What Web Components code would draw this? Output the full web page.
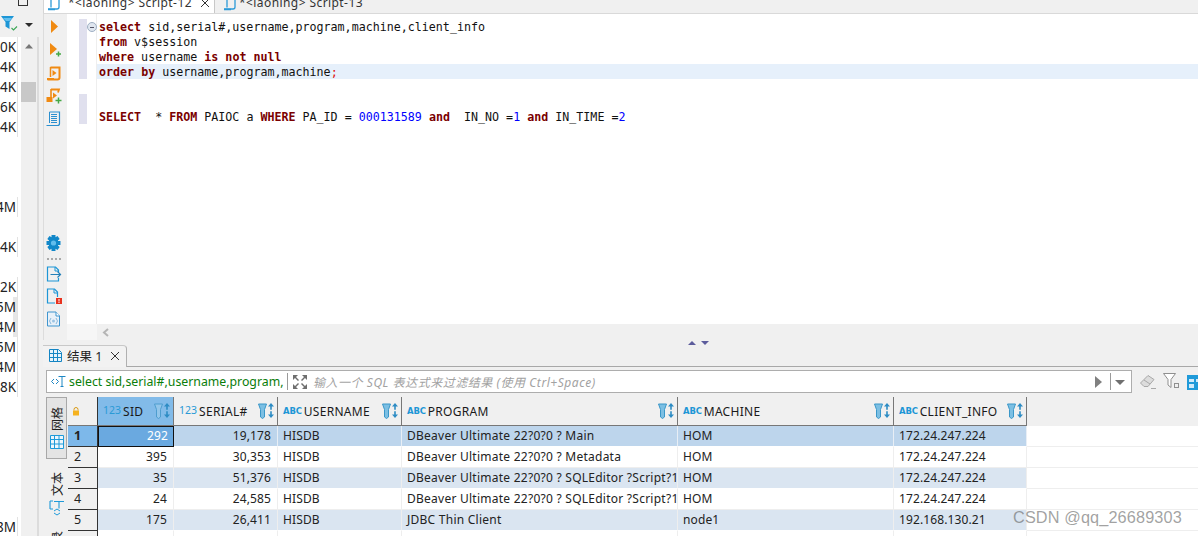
<!DOCTYPE html>
<html>
<head>
<meta charset="utf-8">
<style>
  html, body { margin: 0; height: 536px; overflow: hidden; background: #f0f0f0; }
</style>
</head>
<body>
<ide-app></ide-app>
<script>
const OR = '#f08a12', BL = '#1d96d6', GN = '#45a845', GY = '#8c8c8c';
const ICONS = {
  run: [16, `<path d="M5 0l7 6.500-7 6.500z" fill="${OR}" transform="translate(0 1)"/>`],
  runadd: [16, `<path d="M3 0l7 6-7 6z" fill="${OR}" transform="translate(1 1)"/><path d="M10 12h5M12.500 9.500v5" stroke="${GN}" stroke-width="1.500"/>`],
  script: [16, `<path d="M4.500 2.500h9v10a2 2 0 0 1-2 2h-10" fill="none" stroke="${OR}" stroke-width="2"/><path d="M1 14h7" stroke="${OR}" stroke-width="2"/><path d="M6.500 5l4 3-4 3z" fill="${OR}"/><path d="M4.500 2v10" stroke="${OR}" stroke-width="1.500"/>`],
  scriptadd: [16, `<path d="M5 1.500h8l-1 3" fill="none" stroke="${OR}" stroke-width="1.800"/><path d="M5 1v8" stroke="${OR}" stroke-width="1.600"/><path d="M7 4.500l4 3-4 3z" fill="${OR}"/><rect x="0.500" y="9" width="6" height="5" fill="${OR}"/><path d="M9.500 12.500h6M12.500 9.500v6" stroke="${GN}" stroke-width="1.500"/>`],
  list: [16, `<path d="M3.500 1h10v11.500a2 2 0 0 1-2 2h-11" fill="none" stroke="#2b8fcf" stroke-width="1.200"/><path d="M1 14.500h7M5 3.500h6M5 5.500h6M5 7.500h6M5 9.500h6M5 11.500h6" stroke="#2b8fcf"/><path d="M3.500 1v11" stroke="#2b8fcf"/>`],
  gear: [16, `<path d="M5.500 0h4v2.300l2-1.200 2.200 2.900-1.800 1.500.2 .5h2.400v4h-2.400l-.2 .5 1.800 1.500-2.200 2.900-2-1.200V16h-4v-2.300l-2 1.200-2.200-2.900 1.800-1.500-.2-.5H.5V6h2.400l.2-.5L1.300 4l2.200-2.900 2 1.200z" fill="#1187c9"/><circle cx="7.500" cy="8" r="2.600" fill="#62bcec"/>`],
  dots: [16, `<path d="M1 8h14" stroke="#a9a9a9" stroke-width="2" stroke-dasharray="2 2"/>`],
  exportdoc: [16, `<path d="M12.500 6V4l-3-3h-8v14h11v-3" fill="none" stroke="${BL}" stroke-width="1.200"/><path d="M9 1v4h4" fill="none" stroke="${BL}"/><path d="M4.500 8.500h10M11.500 5.500l3 3-3 3" fill="none" stroke="#227fb8" stroke-width="1.200"/>`],
  errdoc: [16, `<path d="M9 15H1.500V1h7l3 3v5" fill="none" stroke="${BL}" stroke-width="1.200"/><path d="M8 1v4h4" fill="none" stroke="${BL}"/><rect x="10" y="10" width="6" height="6" fill="#e8321e"/><path d="M13 11v2.500M13 14v1" stroke="#fff"/>`],
  xdoc: [16, `<path d="M13.500 4.500l-3.500-3.500H1.500v14h12z" fill="#e8f1f9" stroke="#3f95cf"/><path d="M10 1v4h4" fill="#fff" stroke="#3f95cf"/><path d="M5 7l-1.500 3L5 13M10 7l1.500 3-1.500 3" fill="none" stroke="#8ab8dc"/><circle cx="7.500" cy="10" r="1.500" fill="#9cc3e2"/>`],
  tabdoc: [16, `<path d="M4 0v11.500M12 0v11a2 2 0 0 1-2 2H1" fill="none" stroke="#2b9ad8" stroke-width="1.300"/><path d="M1 13.500h7" stroke="#2b9ad8" stroke-width="1.500"/>`],
  filter: [18, `<path d="M0 0h13l-4.500 6v7l-4-2.500V6z" fill="#1d96d6"/><path d="M2 2h9l-2.500 3H5z" fill="#64c0ee"/><path d="M10.500 12l2 2 3.500-3.500" fill="none" stroke="#3aa655" stroke-width="1.100"/>`],
  caret: [10, `<path d="M1 3h8L5 7z" fill="#2c2c2c"/>`],
  up: [10, `<path d="M1 7.500L5 3l4 4.500z" fill="#777"/>`],
  grid: [14, `<path d="M.5 .5h13v13H.5zM.5 4.500h13M.5 9h13M4.500 .5v13M9 .5v13" fill="#eef7fd" stroke="#1f9ad9"/>`],
  textmode: [16, `<path d="M1 2v8M1 2h3M1 10h3M5 2.500h10M10 2.500v7" fill="none" stroke="#1f9ad9" stroke-width="1.100"/><path d="M5 12l3-2 3 2M5 14l3 2 3-2" fill="none" stroke="#1f9ad9"/>`],
  lock: [8, `<path d="M2 3.500V2.500a2 2 0 0 1 4 0V3.500" fill="none" stroke="#d99a15"/><rect x="1" y="3.500" width="6" height="5" fill="#f5b21f"/>`],
  results: [13, `<path d="M.5 .5h9l3 3v9h-12zM.5 4.500h12M.5 8.500h12M4.500 .5v12M8.500 .5v12" fill="#e6f3fb" stroke="#1485c4"/>`],
  close: [10, `<path d="M1 1l8 8M9 1l-8 8" stroke="#333" stroke-width="1"/>`],
  sqlmark: [16, `<path d="M4 5L1.500 7.500 4 10M6 5l2.500 2.500L6 10" fill="none" stroke="#1d87c4"/><path d="M8.500 2.500h7M12 2.500v10M10.500 12.500h3" fill="none" stroke="#1d87c4"/>`],
  expand: [16, `<path d="M1 1h5L4 3l3 3-1 1-3-3-2 2zM15 1v5l-2-2-3 3-1-1 3-3-2-2zM1 15v-5l2 2 3-3 1 1-3 3 2 2zM15 15h-5l2-2-3-3 1-1 3 3 2-2z" fill="#6f6f6f"/>`],
  play: [12, `<path d="M2 0l7 6-7 6z" fill="#808080"/>`],
  drop: [12, `<path d="M1 4h10L6 9z" fill="#6f6f6f"/>`],
  eraser: [18, `<path d="M1.500 10L9 2.500l6 4L9 13.500H5z" fill="#dcdcdc" stroke="#a8a8a8"/><path d="M5 7l6 4" stroke="#a8a8a8"/><path d="M12 15.500h5" stroke="#a8a8a8"/>`],
  filteroff: [18, `<path d="M.5 .5h12L8 6.500v8l-3-2.500V6.500z" fill="#fff" stroke="#8f8f8f"/><rect x="11.500" y="10.500" width="4" height="4" fill="none" stroke="#8f8f8f"/>`],
  tableblue: [16, `<path d="M0 1h16v15H0z" fill="#1f9ad9"/><path d="M2 5h5v3H2zM9 5h7v3H9zM2 10h5v4H2z" fill="#cfeafa"/>`],
  funnel: [9, `<path d="M.5 1h8L6.500 6.500V14l-2 1.500-2-1.500V6.500z" fill="#7cbfe3" stroke="#3a97c9"/>`],
  funnelin: [9, `<path d="M.5 1h8L6.500 6.500V14l-2 1.500-2-1.500V6.500z" fill="#93c6ea" stroke="#4e9dcf"/>`],
  sort: [8, `<path d="M4 0L1 3.500h2.200v3.300h1.600V3.500H7zM4 15l3-3.500H4.800V8.200H3.200v3.300H1z" fill="#2d8cc4"/>`],
};
const TALL = ['funnel', 'funnelin', 'sort'];

class IdeIcon extends HTMLElement {
  connectedCallback() {
    const name = this.getAttribute('name');
    const [w, body] = ICONS[name];
    const h = TALL.includes(name) ? 16 : w;
    this.attachShadow({ mode: 'open' }).innerHTML = `
      <style>:host { display: inline-flex; flex: none; } svg { display: block; overflow: visible; }</style>
      <svg width="${w}" height="${h}" viewBox="0 0 ${w} ${h}">${body}</svg>`;
  }
}
customElements.define('ide-icon', IdeIcon);

// cut off panel on the left of the picture: only the last chars of the size column show
class NavStrip extends HTMLElement {
  connectedCallback() {
    const sizes = ['0K','4K','4K','6K','4K','','','','4M','','4K','','2K','5M','4M','5M','4M','8K','','','','','','','8M'];
    const rows = sizes.map((s, i) => `<div class="n ${i === 13 ? 'hl' : ''} ${i === 14 ? 'hl2' : ''}"><span class="${s ? 'v' : ''}">${s}</span></div>`).join('');
    this.attachShadow({ mode: 'open' }).innerHTML = `
      <style>
        :host { display: flex; flex-direction: column; width: 43px; height: 536px; flex: none; background: #f0f0f0;
          font: 13.500px "Noto Sans", sans-serif; color: #222; box-sizing: border-box; overflow: hidden; }
        .top { height: 37px; flex: none; display: flex; align-items: flex-start; }
        .sq { width: 8px; height: 5px; border: 1px solid #333; border-top: 0; margin-left: 18px; }
        .tools { height: 37px; display: flex; flex: none; align-items: center; padding: 12px 0 0 1px; box-sizing: border-box; gap: 5px; margin-top: -37px; }
        .body { display: flex; flex: 1; min-height: 0; }
        .nums { width: 21px; background: #fff; flex: none; display: grid; grid-auto-rows: 20px; align-content: start; }
        .n { display: flex; align-items: center; justify-content: flex-end; padding-right: 3px; height: 20px; line-height: 20px; white-space: nowrap; overflow: hidden; }
        .n span { display: block; padding-right: 1px; }
        .n span.v { border-right: 1px solid #e2e2e2; }
        .n.hl, .n.hl2 { background: linear-gradient(90deg, transparent 13px, #e6e6e6 13px, #e6e6e6 18px, transparent 18px); }
        .scroll { width: 15px; flex: none; display: flex; flex-direction: column; align-items: center; padding-top: 4px; }
        .thumb { width: 15px; height: 20px; background: #c8c8c8; margin-top: 31px; }
        .rule { width: 2px; background: #dcdcdc; margin-left: 1px; }
      </style>
      <div class="top"><div class="sq"></div></div>
      <div class="tools"><ide-icon name="filter"></ide-icon><ide-icon name="caret"></ide-icon></div>
      <div class="body">
        <div class="nums">${rows}</div>
        <div class="scroll"><ide-icon name="up"></ide-icon><div class="thumb"></div></div>
        <div class="rule"></div>
      </div>`;
  }
}
customElements.define('nav-strip', NavStrip);

class EditorTabs extends HTMLElement {
  connectedCallback() {
    this.attachShadow({ mode: 'open' }).innerHTML = `
      <style>
        :host { display: flex; height: 14px; flex: none; overflow: hidden; background: #f0f0f0; border-bottom: 1px solid #d9d9d9; box-sizing: border-box;
          font: 12px "Noto Sans", sans-serif; letter-spacing: .42px; color: #333; }
        .tab { display: flex; align-items: flex-start; height: 14px; flex: none; box-sizing: border-box; border-left: 1px solid #d5d5d5; border-right: 1px solid #c8c8c8; }
        .a { width: 172px; background: #fff; padding-left: 3px; }
        .b { width: 168px; padding-left: 8px; border-left: 0; border-right: 0; }
        ide-icon { margin-top: -4px; }
        span { margin: -6px 0 0 5px; line-height: 18px; white-space: nowrap; }
        .b span { margin-left: 0; }
        .x { margin: -2px 0 0 8px; }
      </style>
      <div class="tab a"><ide-icon name="tabdoc"></ide-icon><span>*&lt;laoning&gt; Script-12</span><ide-icon class="x" name="close"></ide-icon></div>
      <div class="tab b"><ide-icon name="tabdoc"></ide-icon><span>*&lt;laoning&gt; Script-13</span></div>`;
  }
}
customElements.define('editor-tabs', EditorTabs);

class SqlEditor extends HTMLElement {
  connectedCallback() {
    const k = s => `<b>${s}</b>`, n = s => `<i>${s}</i>`;
    const lines = [
      `${k('select')} sid,serial#,username,program,machine,client_info`,
      `${k('from')} v$session`,
      `${k('where')} username ${k('is')} ${k('not')} ${k('null')}`,
      `${k('order')} ${k('by')} username,program,machine<u>;</u>`,
      ``, ``,
      `${k('SELECT')}  * ${k('FROM')} PAIOC a ${k('WHERE')} PA_ID = ${n('000131589')} ${k('and')}  IN_NO =${n('1')} ${k('and')} IN_TIME =${n('2')}`,
    ];
    this.attachShadow({ mode: 'open' }).innerHTML = `
      <style>
        :host { display: flex; height: 326px; flex: none; background: #fff; }
        .bar { width: 24px; flex: none; background: #f0f0f0; border-left: 1px solid #dcdcdc; box-sizing: border-box; display: flex; flex-direction: column; align-items: center; padding-right: 3px; }
        .bar .slot { height: 23px; display: flex; align-items: center; flex: none; }
        .bar .mini { height: 15px; display: flex; align-items: center; flex: none; }
        .bar .top { height: 228px; padding-top: 1px; box-sizing: border-box; flex: none; display: flex; flex-direction: column; }
        .main { flex: 1; display: flex; flex-direction: column; min-width: 0; }
        .edit { flex: 1; display: flex; min-height: 0; }
        .gutter { width: 30px; flex: none; border-right: 1px solid #eee; box-sizing: border-box; padding: 5px 0 0 12px; position: relative; }
        .m { width: 8px; background: #e0e0ee; }
        .m1 { height: 60px; } .m2 { height: 30px; margin-top: 15px; }
        .fold { position: absolute; left: 20px; top: 8px; width: 8px; height: 8px; border-radius: 50%; background: #dfe6ef; border: 1px solid #9fb0c4; }
        .fold::after { content: ""; position: absolute; left: 2px; top: 3.500px; width: 4px; height: 1px; background: #556; }
        pre { margin: 0; padding: 5px 0 0 0; flex: 1; font: 11.670px/15px "DejaVu Sans Mono", monospace; color: #111; min-width: 0; }
        .l { height: 15px; padding: 1px 0 0 2px; box-sizing: border-box; white-space: pre; }
        .cur { background: #e6f0fb; }
        b { color: #7a0000; font-weight: bold; }
        i { color: #0000ff; font-style: normal; }
        u { color: #e01010; text-decoration: none; }
        .hs { height: 16px; flex: none; display: flex; background: #f0f0f0; }
        .hs .c { width: 30px; background: #f6f6f6; }
        .hs svg { margin: 4px 0 0 5px; }
      </style>
      <div class="bar">
        <div class="top">
          <div class="slot"><ide-icon name="run"></ide-icon></div>
          <div class="slot"><ide-icon name="runadd"></ide-icon></div>
          <div class="slot"><ide-icon name="script"></ide-icon></div>
          <div class="slot"><ide-icon name="scriptadd"></ide-icon></div>
          <div class="slot"><ide-icon name="list"></ide-icon></div>
        </div>
        <div class="mini" style="margin-top:-7px;height:16px"><ide-icon name="gear"></ide-icon></div>
        <div class="mini"><ide-icon name="dots"></ide-icon></div>
        <div class="slot" style="height:16px"><ide-icon name="exportdoc"></ide-icon></div>
        <div class="slot" style="margin-top:2px"><ide-icon name="errdoc"></ide-icon></div>
        <div class="slot"><ide-icon name="xdoc"></ide-icon></div>
      </div>
      <div class="main">
        <div class="edit">
          <div class="gutter"><div class="m m1"></div><div class="m m2"></div><div class="fold"></div></div>
          <pre>${lines.map((l, i) => `<div class="l ${i === 3 ? 'cur' : ''}">${l}</div>`).join('')}</pre>
        </div>
        <div class="hs"><div class="c"></div><svg width="8" height="9"><path d="M6 1L2 4.500 6 8" fill="none" stroke="#b5b5b5" stroke-width="2"/></svg></div>
      </div>`;
  }
}
customElements.define('sql-editor', SqlEditor);

class SashHandle extends HTMLElement {
  connectedCallback() {
    this.attachShadow({ mode: 'open' }).innerHTML = `
      <style>
        :host { display: flex; height: 5px; flex: none; background: #f0f0f0; padding-left: 645px; gap: 5px; align-items: flex-end; }
        svg { display: block; }
      </style>
      <svg width="8" height="4"><path d="M4 0l4 4H0z" fill="#5c5c9c"/></svg>
      <svg width="8" height="4"><path d="M0 0h8L4 4z" fill="#5c5c9c"/></svg>`;
  }
}
customElements.define('sash-handle', SashHandle);

class ResultTabs extends HTMLElement {
  connectedCallback() {
    this.attachShadow({ mode: 'open' }).innerHTML = `
      <style>
        :host { display: flex; height: 22px; flex: none; box-sizing: border-box; border-bottom: 1px solid #a8a8a8;
          font: 12.500px "Noto Sans", "Noto Sans CJK SC", sans-serif; color: #222; }
        .t { width: 84px; height: 22px; box-sizing: border-box; background: #f2f2f2; border: 1px solid #b0b0b0; border-left: 0; border-bottom: 0; border-top-right-radius: 4px; border-top-color: #c8c8c8;
          display: flex; align-items: center; padding: 0 0 2px 6px; gap: 5px; white-space: nowrap; }
        ide-icon:last-child { margin-left: 3px; }
      </style>
      <div class="t"><ide-icon name="results"></ide-icon><span>结果 1</span><ide-icon name="close"></ide-icon></div>`;
  }
}
customElements.define('result-tabs', ResultTabs);

class FilterBar extends HTMLElement {
  connectedCallback() {
    this.attachShadow({ mode: 'open' }).innerHTML = `
      <style>
        :host { display: flex; height: 23px; flex: none; margin: 3px 0 4px 3px; align-items: center; }
        .box { width: 1086px; height: 23px; box-sizing: border-box; flex: none; background: #fff; border: 1px solid #adadad; display: flex; align-items: center; padding-left: 3px; white-space: nowrap; }
        .sql { font: 12.300px "Noto Sans", sans-serif; color: #0a7d0a; margin-left: 3px; width: 218px; overflow: hidden; flex: none; }
        .sep { width: 1px; height: 17px; background: #9a9a9a; flex: none; }
        .ph { font: italic 12px "Noto Sans", "Noto Sans CJK SC", sans-serif; color: #a2a2a2; margin-left: 5px; letter-spacing: .54px; flex: 1; }
        .btns { display: flex; align-items: center; flex: none; }
        .acts { display: flex; align-items: center; gap: 6px; margin-left: 7px; }
      </style>
      <div class="box">
        <ide-icon name="sqlmark"></ide-icon>
        <div class="sql">select sid,serial#,username,program,</div>
        <div class="sep"></div>
        <ide-icon name="expand" style="margin-left:4px"></ide-icon>
        <div class="ph">输入一个 SQL 表达式来过滤结果 (使用 Ctrl+Space)</div>
        <div class="btns">
          <ide-icon name="play"></ide-icon>
          <div class="sep" style="margin:0 3px 0 5px"></div>
          <ide-icon name="drop" style="margin-right:5px"></ide-icon>
        </div>
      </div>
      <div class="acts">
        <ide-icon name="eraser"></ide-icon>
        <ide-icon name="filteroff"></ide-icon>
        <ide-icon name="tableblue"></ide-icon>
      </div>`;
  }
}
customElements.define('filter-bar', FilterBar);

class ResultGrid extends HTMLElement {
  connectedCallback() {
    const cols = [['123','SID'],['123','SERIAL#'],['ABC','USERNAME'],['ABC','PROGRAM'],['ABC','MACHINE'],['ABC','CLIENT_INFO']];
    const rows = [
      ['292','19,178','HISDB','DBeaver Ultimate 22?0?0 ? Main','HOM','172.24.247.224'],
      ['395','30,353','HISDB','DBeaver Ultimate 22?0?0 ? Metadata','HOM','172.24.247.224'],
      ['35','51,376','HISDB','DBeaver Ultimate 22?0?0 ? SQLEditor ?Script?1','HOM','172.24.247.224'],
      ['24','24,585','HISDB','DBeaver Ultimate 22?0?0 ? SQLEditor ?Script?1','HOM','172.24.247.224'],
      ['175','26,411','HISDB','JDBC Thin Client','node1','192.168.130.21'],
      ['','','','','',''],
    ];
    const head = cols.map(([t, n], i) => `
      <div class="hc ${i === 0 ? 'sel' : ''}">
        <span class="${t === '123' ? 'num' : 'abc'}">${t}</span><span class="name">${n}</span>
        <ide-icon name="${i === 0 ? 'funnelin' : 'funnel'}"></ide-icon><ide-icon name="sort"></ide-icon>
      </div>`).join('');
    const body = rows.map((r, ri) => `
      <div class="rn ${ri === 0 ? 'on' : ''}">${r[0] ? ri + 1 : ''}</div>
      ${r.map((v, ci) => `<div class="c ${ci < 2 ? 'r' : ''} ${ci === 3 ? 'prog' : ''} ${ri === 0 ? 'r0' : ri % 2 === 0 ? 'alt' : ''} ${ri === 0 && ci === 0 ? 'focus' : ''}">${v}</div>`).join('')}
      <div class="c end"></div>`).join('');
    this.attachShadow({ mode: 'open' }).innerHTML = `
      <style>
        :host { display: flex; flex: 1; min-height: 0; overflow: hidden; font: 12px "Noto Sans", sans-serif; color: #222; letter-spacing: .12px; }
        .side { width: 25px; flex: none; display: flex; flex-direction: column; align-items: center; padding-left: 2px; box-sizing: border-box; font-family: "Noto Sans CJK SC", sans-serif; }
        .st { width: 21px; display: flex; flex-direction: column; align-items: center; flex: none; box-sizing: border-box; }
        .st.on { height: 62px; background: #e4e4e4; border: 1px solid #a8a8a8; padding-top: 9px; gap: 4px; }
        .st.off { margin-top: 13px; gap: 3px; height: 46px; }
        .st span { writing-mode: vertical-rl; text-orientation: sideways; transform: rotate(180deg); line-height: 14px; font-size: 12px; letter-spacing: 0; }
        .grid { display: grid; grid-template-columns: 30px 76px 104px 124px 276px 216px 133px 1fr; grid-template-rows: 29px; grid-auto-rows: 21px; flex: 1; min-width: 0; }
        .corner { background: #f0f0f0; border-right: 1px solid #333; border-bottom: 1px solid #777; box-sizing: border-box; padding: 5px 0 0 4px; }
        .hc { display: flex; align-items: center; box-sizing: border-box; border-right: 1px solid #777; border-bottom: 1px solid #777; padding-left: 5px; background: #f0f0f0; min-width: 0; white-space: nowrap; }
        .hc.sel { background: #82bbe9; }
        .hc ide-icon:first-of-type { margin-left: auto; margin-right: 0; }
        .hc ide-icon:last-of-type { margin-right: 2px; }
        .name { margin-left: 2px; color: #1a1a1a; letter-spacing: .3px; }
        .num { font-size: 10.500px; color: #2a9ad6; letter-spacing: 0; margin-bottom: 3px; }
        .abc { font: bold 8.500px "DejaVu Sans", sans-serif; color: #1d96d6; letter-spacing: -.2px; }
        .rn { background: #f0f0f0; border-right: 1px solid #333; border-bottom: 1px solid #333; box-sizing: border-box; padding-left: 6px; line-height: 20px; font-size: 12.500px; }
        .rn.on { background: #7db8ea; font-weight: bold; }
        .c { box-sizing: border-box; line-height: 20px; padding: 0 5px; background: #fff; border-right: 1px solid #eee; border-bottom: 1px solid #eee; white-space: nowrap; overflow: hidden; }
        .c.prog { letter-spacing: .25px; padding-right: 0; }
        .c.r { text-align: right; padding-right: 6px; }
        .c.r0 { background: #bdd5ec; border-right-color: #e8eef5; border-bottom-color: #fff; }
        .c.alt { background: #dae5f1; border-bottom-color: #fff; }
        .c.focus { background: #6aa9e0; border: 1px solid #111; color: #fff; line-height: 18px; padding-right: 5px; }
        .c.end { border-right: 0; background: #fff; }
      </style>
      <div class="side">
        <div class="st on"><span>网格</span><ide-icon name="grid"></ide-icon></div>
        <div class="st off"><span>文本</span><ide-icon name="textmode"></ide-icon></div>
        <div class="st off"><span>记录</span></div>
      </div>
      <div class="grid">
        <div class="corner"><ide-icon name="lock"></ide-icon></div>
        ${head}
        <div class="hc" style="border:0"></div>
        ${body}
      </div>`;
  }
}
customElements.define('result-grid', ResultGrid);

class IdeApp extends HTMLElement {
  connectedCallback() {
    this.attachShadow({ mode: 'open' }).innerHTML = `
      <style>
        :host { display: flex; width: 1198px; height: 536px; overflow: hidden; position: relative; background: #f0f0f0; }
        .right { flex: 1; min-width: 0; display: flex; flex-direction: column; }
        .mark { position: absolute; left: 1013px; top: 508px; font: 16.300px "Liberation Sans", sans-serif; color: rgba(100, 100, 100, .6); white-space: nowrap; letter-spacing: .12px; }
      </style>
      <nav-strip></nav-strip>
      <div class="right">
        <editor-tabs></editor-tabs>
        <sql-editor></sql-editor>
        <sash-handle></sash-handle>
        <result-tabs></result-tabs>
        <filter-bar></filter-bar>
        <result-grid></result-grid>
      </div>
      <div class="mark">CSDN @qq_26689303</div>`;
  }
}
customElements.define('ide-app', IdeApp);
</script>
</body>
</html>
